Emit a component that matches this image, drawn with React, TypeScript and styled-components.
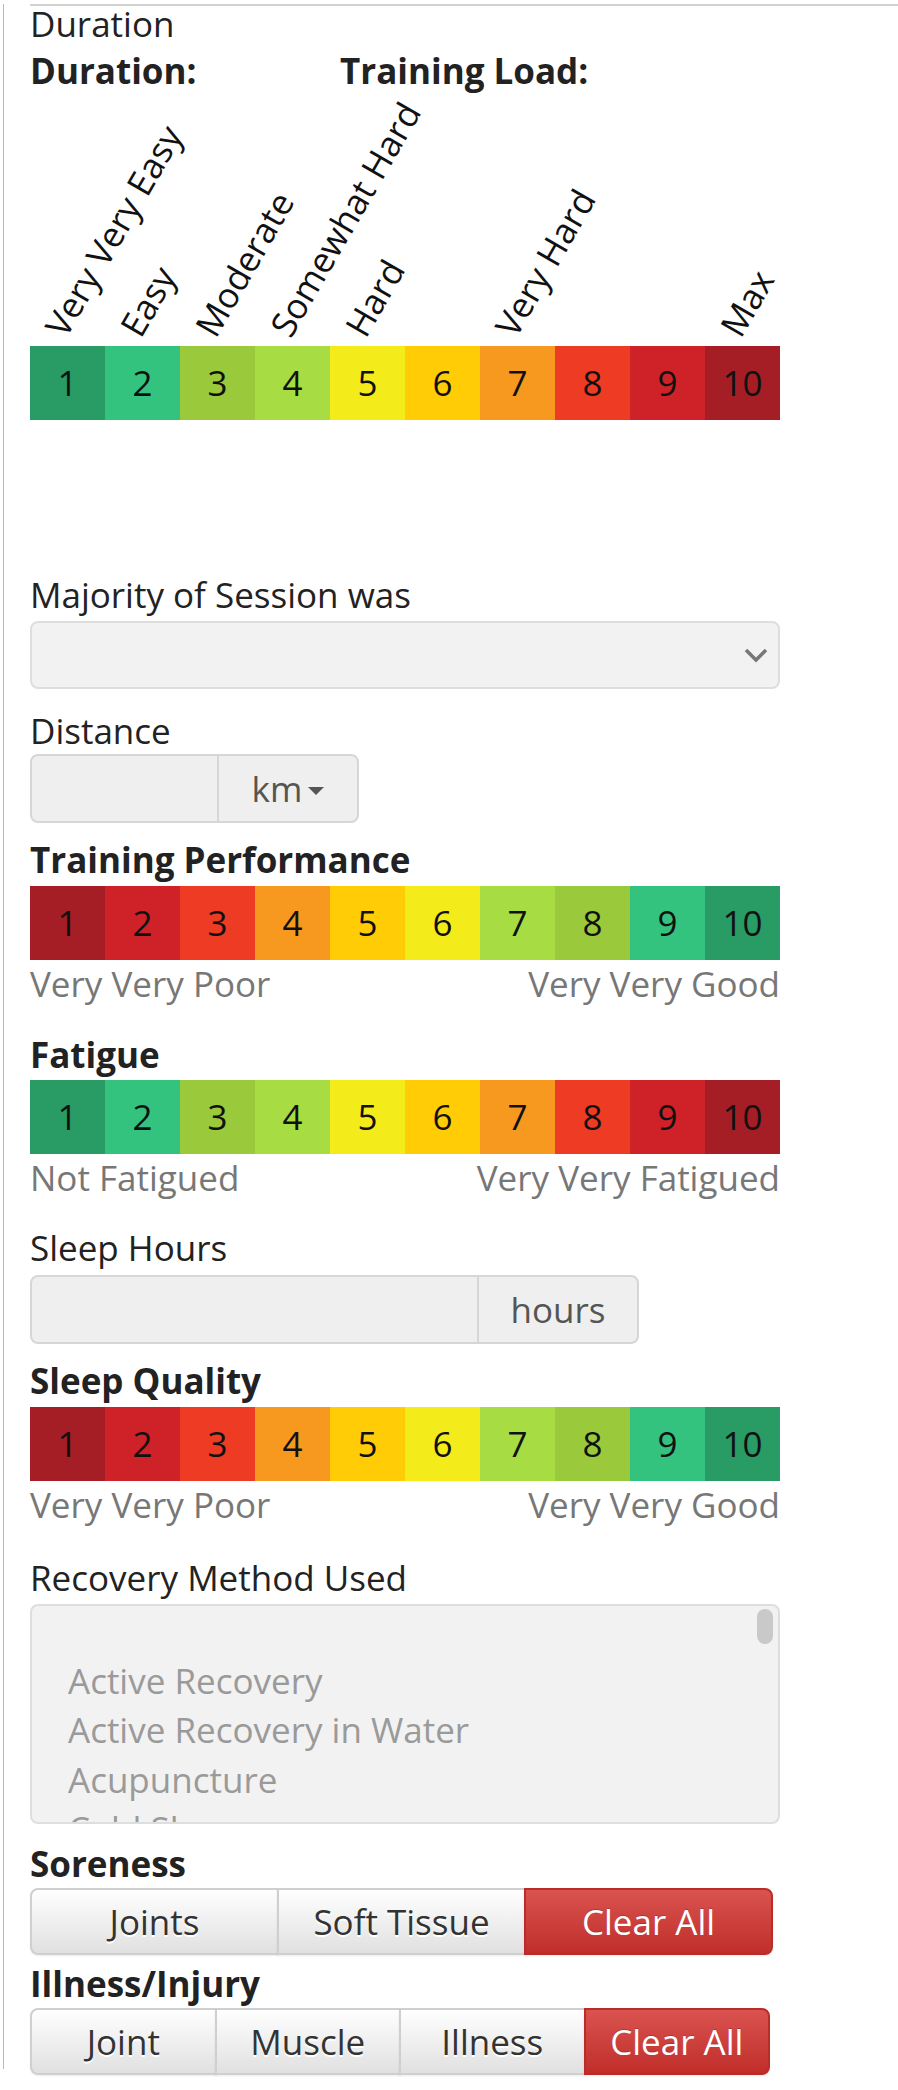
import styled, { createGlobalStyle } from 'styled-components';

const GlobalStyle = createGlobalStyle`
  html, body {
    margin: 0;
    padding: 0;
    background: #fff;
  }
  body {
    font-family: "Open Sans", "Liberation Sans", sans-serif;
    color: #222;
  }
`;

const Page = styled.div`
  width: 898px;
  height: 2090px;
  overflow: hidden;
`;

const Frame = styled.div`
  margin-left: 3px;
  height: 2065px;
  border-left: 1px solid #bbb;
  padding-left: 26px;
  font-size: 35px;
  line-height: 36px;
`;

const Rule = styled.div`
  margin-top: 4px;
  height: 2px;
  background: #d2d2d2;
`;

const Field = styled.div<{ $top: number }>`
  margin-top: ${({ $top }) => $top}px;
`;

const Label = styled.div<{ $bold?: boolean }>`
  font-weight: ${({ $bold }) => ($bold ? 700 : 400)};
  color: #222;
  white-space: nowrap;
`;

const SummaryRow = styled.div`
  display: flex;
  font-weight: 700;
  color: #222;
`;

const SummaryItem = styled.div`
  width: 310px;
`;

const Header = styled.div`
  display: grid;
  grid-template-columns: repeat(10, 75px);
  height: 257px;
`;

const HeaderCell = styled.div`
  position: relative;
`;

const Tick = styled.span`
  position: absolute;
  left: 40px;
  bottom: 4px;
  transform-origin: 0 100%;
  transform: rotate(-60deg);
  white-space: nowrap;
  color: #111;
`;

const Bar = styled.div`
  display: grid;
  grid-template-columns: repeat(10, 75px);
  height: 74px;
`;

const Cell = styled.div<{ $bg: string }>`
  display: flex;
  align-items: center;
  justify-content: center;
  background: ${({ $bg }) => $bg};
  color: #111;
`;

const Captions = styled.div`
  display: flex;
  justify-content: space-between;
  width: 750px;
  margin-top: 6px;
  color: #777;
`;

const Select = styled.div`
  box-sizing: border-box;
  display: flex;
  align-items: center;
  justify-content: flex-end;
  width: 750px;
  height: 68px;
  padding-right: 10px;
  background: #f2f2f2;
  border: 2px solid #dedede;
  border-radius: 8px;
`;

const InputGroup = styled.div<{ $width: number }>`
  box-sizing: border-box;
  display: flex;
  width: ${({ $width }) => $width}px;
  height: 69px;
  background: #efefef;
  border: 2px solid #d6d6d6;
  border-radius: 8px;
  overflow: hidden;
`;

const InputField = styled.div`
  flex: 1;
`;

const Addon = styled.div<{ $width: number }>`
  display: flex;
  align-items: center;
  justify-content: center;
  gap: 6px;
  width: ${({ $width }) => $width}px;
  border-left: 2px solid #d6d6d6;
  color: #555;
`;

const Caret = styled.span`
  width: 0;
  height: 0;
  margin-top: 4px;
  border-left: 8px solid transparent;
  border-right: 8px solid transparent;
  border-top: 8px solid #555;
`;

const ListBox = styled.div`
  box-sizing: border-box;
  display: flex;
  width: 750px;
  height: 220px;
  background: #f2f2f2;
  border: 2px solid #dedede;
  border-radius: 8px;
  overflow: hidden;
`;

const Options = styled.div`
  flex: 1;
  padding-left: 36px;
`;

const Option = styled.div`
  height: 49.5px;
  line-height: 49.5px;
  color: #9a9a9a;
  white-space: nowrap;
`;

const ScrollTrack = styled.div`
  width: 16px;
  padding: 3px 5px 0;
`;

const Thumb = styled.div`
  height: 35px;
  border-radius: 8px;
  background: #c9c9c9;
`;

const ButtonGroup = styled.div<{ $width: number }>`
  display: flex;
  width: ${({ $width }) => $width}px;
  height: 67px;
`;

const Button = styled.div<{ $danger?: boolean }>`
  box-sizing: border-box;
  flex: 1;
  display: flex;
  align-items: center;
  justify-content: center;
  margin-left: -2px;
  border: 2px solid ${({ $danger }) => ($danger ? '#b92c28' : '#cfcfcf')};
  background: ${({ $danger }) =>
    $danger
      ? 'linear-gradient(#d9534f, #c12e2a)'
      : 'linear-gradient(#ffffff, #e0e0e0)'};
  color: ${({ $danger }) => ($danger ? '#fff' : '#333')};
  text-shadow: ${({ $danger }) =>
    $danger ? '0 -1px 0 rgba(0,0,0,0.2)' : '0 2px 0 #fff'};
  box-shadow: 0 1px 2px rgba(0, 0, 0, 0.08);

  &:first-child {
    margin-left: 0;
    border-radius: 8px 0 0 8px;
  }
  &:last-child {
    border-radius: 0 8px 8px 0;
  }
`;

const ascending = [
  '#299b65', '#34c37f', '#9ac93c', '#a7dd42', '#f3ec1a',
  '#ffcc05', '#f7981f', '#ee3b24', '#cf2128', '#a51e25',
];
const descending = [...ascending].reverse();

const ticks = [
  'Very Very Easy', 'Easy', 'Moderate', 'Somewhat Hard', 'Hard',
  '', 'Very Hard', '', '', 'Max',
];

const recovery = [
  '', 'Active Recovery', 'Active Recovery in Water', 'Acupuncture', 'Cold Shower',
];

const Scale = ({ colors }: { colors: string[] }) => (
  <Bar>
    {colors.map((c, i) => (
      <Cell key={i} $bg={c}>{i + 1}</Cell>
    ))}
  </Bar>
);

const Chevron = () => (
  <svg width="24" height="16" viewBox="0 0 24 16">
    <polyline points="2,3 12,13 22,3" fill="none" stroke="#777" strokeWidth="3.5" />
  </svg>
);

export default function App() {
  return (
    <Page>
      <GlobalStyle />
      <Frame>
        <Rule />
        <Label>Duration</Label>
        <Field $top={11}>
          <SummaryRow>
            <SummaryItem>Duration:</SummaryItem>
            <SummaryItem>Training Load:</SummaryItem>
          </SummaryRow>
        </Field>
        <Header>
          {ticks.map((t, i) => (
            <HeaderCell key={i}>{t && <Tick>{t}</Tick>}</HeaderCell>
          ))}
        </Header>
        <Scale colors={ascending} />

        <Field $top={157}>
          <Label>Majority of Session was</Label>
        </Field>
        <Field $top={8}>
          <Select>
            <Chevron />
          </Select>
        </Field>

        <Field $top={24}>
          <Label>Distance</Label>
        </Field>
        <Field $top={5}>
          <InputGroup $width={329}>
            <InputField />
            <Addon $width={138}>
              km<Caret />
            </Addon>
          </InputGroup>
        </Field>

        <Field $top={19}>
          <Label $bold>Training Performance</Label>
        </Field>
        <Field $top={8}>
          <Scale colors={descending} />
          <Captions>
            <span>Very Very Poor</span>
            <span>Very Very Good</span>
          </Captions>
        </Field>

        <Field $top={35}>
          <Label $bold>Fatigue</Label>
        </Field>
        <Field $top={7}>
          <Scale colors={ascending} />
          <Captions>
            <span>Not Fatigued</span>
            <span>Very Very Fatigued</span>
          </Captions>
        </Field>

        <Field $top={34}>
          <Label>Sleep Hours</Label>
        </Field>
        <Field $top={9}>
          <InputGroup $width={609}>
            <InputField />
            <Addon $width={158}>hours</Addon>
          </InputGroup>
        </Field>

        <Field $top={19}>
          <Label $bold>Sleep Quality</Label>
        </Field>
        <Field $top={8}>
          <Scale colors={descending} />
          <Captions>
            <span>Very Very Poor</span>
            <span>Very Very Good</span>
          </Captions>
        </Field>

        <Field $top={37}>
          <Label>Recovery Method Used</Label>
        </Field>
        <Field $top={8}>
          <ListBox>
            <Options>
              {recovery.map((r, i) => (
                <Option key={i}>{r}</Option>
              ))}
            </Options>
            <ScrollTrack>
              <Thumb />
            </ScrollTrack>
          </ListBox>
        </Field>

        <Field $top={22}>
          <Label $bold>Soreness</Label>
        </Field>
        <Field $top={6}>
          <ButtonGroup $width={743}>
            <Button>Joints</Button>
            <Button>Soft Tissue</Button>
            <Button $danger>Clear All</Button>
          </ButtonGroup>
        </Field>

        <Field $top={11}>
          <Label $bold>Illness/Injury</Label>
        </Field>
        <Field $top={6}>
          <ButtonGroup $width={740}>
            <Button>Joint</Button>
            <Button>Muscle</Button>
            <Button>Illness</Button>
            <Button $danger>Clear All</Button>
          </ButtonGroup>
        </Field>
      </Frame>
    </Page>
  );
}
